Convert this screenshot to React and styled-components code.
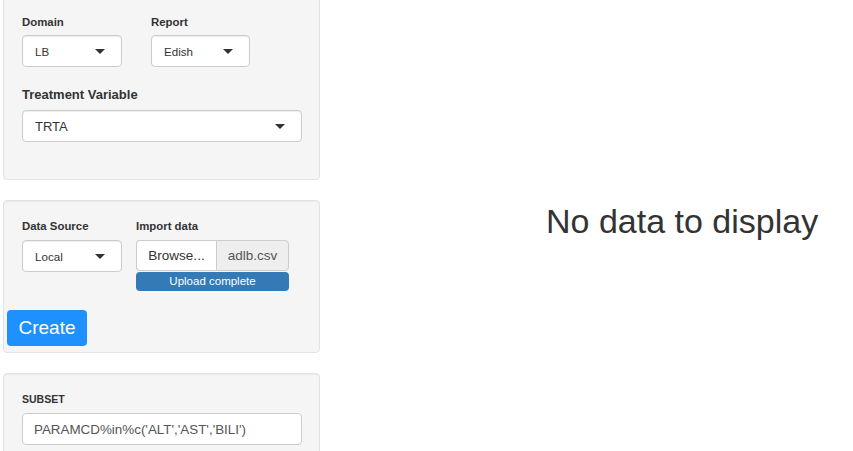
import React from "react";
import styled, { createGlobalStyle } from "styled-components";

const Global = createGlobalStyle`
  html, body { margin: 0; padding: 0; background: #fff; }
  body {
    font-family: "Liberation Sans", Arial, Helvetica, sans-serif;
    color: #333;
    overflow: hidden;
  }
`;

const Page = styled.div`
  display: flex;
  width: 853px;
  height: 451px;
  overflow: hidden;
`;

const Sidebar = styled.div`
  width: 317px;
  margin-left: 3px;
  margin-top: -21px;
  display: flex;
  flex-direction: column;
  gap: 20px;
  flex-shrink: 0;
`;

const Well = styled.div`
  background: #f5f5f5;
  border: 1px solid #e3e3e3;
  border-radius: 4px;
  box-shadow: inset 0 1px 1px rgba(0, 0, 0, 0.05);
  padding: ${(p) => p.$pad || "18px 18px 37px 18px"};
  display: flex;
  flex-direction: column;
`;

const Row = styled.div`
  display: flex;
  align-items: flex-start;
  gap: ${(p) => p.$gap || "29px"};
`;

const Field = styled.div`
  display: flex;
  flex-direction: column;
  width: ${(p) => p.$w || "auto"};
  margin-top: ${(p) => p.$mt || "0"};
`;

const Label = styled.label`
  font-weight: bold;
  font-size: ${(p) => p.$size || "11.4px"};
  line-height: ${(p) => p.$lh || "14px"};
  margin-bottom: ${(p) => p.$mb || "6px"};
  text-transform: ${(p) => (p.$upper ? "uppercase" : "none")};
  color: #333;
`;

const Select = styled.div`
  box-sizing: border-box;
  width: ${(p) => p.$w || "100px"};
  height: ${(p) => p.$h || "32px"};
  background: #fff;
  border: 1px solid #ccc;
  border-radius: 4px;
  display: flex;
  align-items: center;
  justify-content: space-between;
  padding: 0 16px 0 12px;
  font-size: ${(p) => p.$size || "11.6px"};
  color: #333;
  box-shadow: inset 0 1px 1px rgba(0, 0, 0, 0.075);
`;

const Caret = styled.span`
  width: 0;
  height: 0;
  border-left: 5px solid transparent;
  border-right: 5px solid transparent;
  border-top: 5px solid #333;
`;

const FileGroup = styled.div`
  display: flex;
  height: 31px;
  width: 153px;
  box-sizing: border-box;
`;

const BrowseBtn = styled.div`
  box-sizing: border-box;
  width: 80px;
  height: 100%;
  background: #fff;
  border: 1px solid #ccc;
  border-right: none;
  border-radius: 4px 0 0 4px;
  display: flex;
  align-items: center;
  justify-content: center;
  font-size: 13.5px;
  color: #333;
`;

const FileName = styled.div`
  box-sizing: border-box;
  flex: 1;
  height: 100%;
  background: #eee;
  border: 1px solid #ccc;
  border-radius: 0 4px 4px 0;
  display: flex;
  align-items: center;
  justify-content: center;
  font-size: 13.5px;
  color: #555;
`;

const Progress = styled.div`
  width: 153px;
  height: 19px;
  margin-top: 1px;
  background: #337ab7;
  border-radius: 4px;
  color: #fff;
  font-size: 11.5px;
  line-height: 19px;
  text-align: center;
`;

const CreateButton = styled.button`
  align-self: flex-start;
  margin: 19px 0 0 -15px;
  width: 80px;
  height: 36px;
  border: none;
  border-radius: 4px;
  background: #1e90ff;
  color: #fff;
  font-family: "Liberation Sans", Arial, sans-serif;
  font-size: 19px;
  padding: 0;
  cursor: pointer;
`;

const TextInput = styled.div`
  box-sizing: border-box;
  width: 280px;
  height: 32px;
  background: #fff;
  border: 1px solid #ccc;
  border-radius: 4px;
  display: flex;
  align-items: center;
  padding: 0 11px;
  font-size: 13.4px;
  color: #555;
`;

const Main = styled.div`
  flex: 1;
  padding: 201px 0 0 226px;
`;

const Empty = styled.div`
  font-size: 34px;
  line-height: 40px;
  color: #333;
  white-space: nowrap;
`;

export default function App() {
  return (
    <>
      <Global />
      <Page>
        <Sidebar>
          <Well $pad="35px 18px 37px 18px">
            <Row $gap="29px">
              <Field>
                <Label>Domain</Label>
                <Select $w="100px">
                  LB <Caret />
                </Select>
              </Field>
              <Field>
                <Label>Report</Label>
                <Select $w="99px">
                  Edish <Caret />
                </Select>
              </Field>
            </Row>
            <Field $mt="20px">
              <Label $size="13px" $lh="16px" $mb="7px">
                Treatment Variable
              </Label>
              <Select $w="280px" $size="13px">
                TRTA <Caret />
              </Select>
            </Field>
          </Well>
          <Well $pad="18px 18px 6px 18px">
            <Row $gap="14px">
              <Field>
                <Label $mb="7px">Data Source</Label>
                <Select $w="100px">
                  Local <Caret />
                </Select>
              </Field>
              <Field>
                <Label $mb="7px">Import data</Label>
                <FileGroup>
                  <BrowseBtn>Browse...</BrowseBtn>
                  <FileName>adlb.csv</FileName>
                </FileGroup>
                <Progress>Upload complete</Progress>
              </Field>
            </Row>
            <CreateButton>Create</CreateButton>
          </Well>
          <Well $pad="19px 18px 20px 18px">
            <Field>
              <Label $size="10.5px" $lh="13px" $mb="7px" $upper>
                Subset
              </Label>
              <TextInput>PARAMCD%in%c('ALT','AST','BILI')</TextInput>
            </Field>
          </Well>
        </Sidebar>
        <Main>
          <Empty>No data to display</Empty>
        </Main>
      </Page>
    </>
  );
}
